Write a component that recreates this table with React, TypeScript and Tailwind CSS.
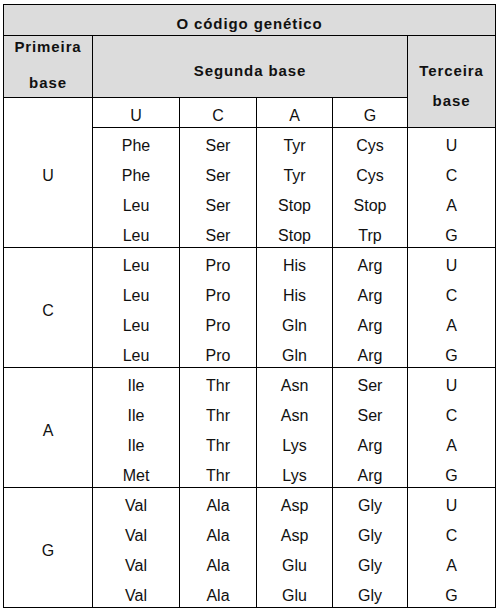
import React from "react";

const groups = [
  {
    base: "U",
    rows: [
      ["Phe", "Ser", "Tyr", "Cys", "U"],
      ["Phe", "Ser", "Tyr", "Cys", "C"],
      ["Leu", "Ser", "Stop", "Stop", "A"],
      ["Leu", "Ser", "Stop", "Trp", "G"],
    ],
  },
  {
    base: "C",
    rows: [
      ["Leu", "Pro", "His", "Arg", "U"],
      ["Leu", "Pro", "His", "Arg", "C"],
      ["Leu", "Pro", "Gln", "Arg", "A"],
      ["Leu", "Pro", "Gln", "Arg", "G"],
    ],
  },
  {
    base: "A",
    rows: [
      ["Ile", "Thr", "Asn", "Ser", "U"],
      ["Ile", "Thr", "Asn", "Ser", "C"],
      ["Ile", "Thr", "Lys", "Arg", "A"],
      ["Met", "Thr", "Lys", "Arg", "G"],
    ],
  },
  {
    base: "G",
    rows: [
      ["Val", "Ala", "Asp", "Gly", "U"],
      ["Val", "Ala", "Asp", "Gly", "C"],
      ["Val", "Ala", "Glu", "Gly", "A"],
      ["Val", "Ala", "Glu", "Gly", "G"],
    ],
  },
];

const head = "bg-[#dcdcdc] font-bold text-[15px] tracking-[0.9px] leading-[18px]";

export default function App() {
  return (
    <div className="min-h-screen bg-white pl-[3px] pt-[4px] font-['Liberation_Sans',Arial,sans-serif] text-[#111]">
      <div className="grid w-[493px] grid-cols-[89px_87px_77px_76px_75px_88px] grid-rows-[31px_62px_30px_repeat(16,30px)] border-l border-t border-black">
        {/* cabeçalho */}
        <div className={`${head} col-span-6 flex items-center justify-center border-r border-b border-black pt-[7px]`}>
          O código genético
        </div>
        <div className={`${head} flex flex-col items-center justify-center gap-[18px] border-r border-b border-black pb-[4px]`}>
          <span>Primeira</span>
          <span>base</span>
        </div>
        <div className={`${head} col-span-4 flex items-center justify-center border-r border-b border-black pt-[8px]`}>
          Segunda base
        </div>
        <div className={`${head} row-span-2 flex flex-col items-center justify-center gap-[12px] border-r border-b border-black pt-[8px]`}>
          <span>Terceira</span>
          <span>base</span>
        </div>

        {groups.map((g, gi) => (
          <React.Fragment key={g.base}>
            <div
              className={`${gi === 0 ? "row-span-5" : "row-span-4"} flex items-center justify-center border-r border-b border-black pt-[6px] text-[16px] leading-[18px]`}
            >
              {g.base}
            </div>
            {gi === 0 &&
              ["U", "C", "A", "G"].map((b) => (
                <div
                  key={b}
                  className="flex items-center justify-center border-r border-b border-black pt-[6px] text-[16px] leading-[18px]"
                >
                  {b}
                </div>
              ))}
            {g.rows.map((row, ri) =>
              row.map((cell, ci) => (
                <div
                  key={`${ri}-${ci}`}
                  className={`flex items-center justify-center border-r border-black pt-[6px] text-[16px] leading-[18px] ${ri === 3 ? "border-b" : ""}`}
                >
                  {cell}
                </div>
              ))
            )}
          </React.Fragment>
        ))}
      </div>
    </div>
  );
}
